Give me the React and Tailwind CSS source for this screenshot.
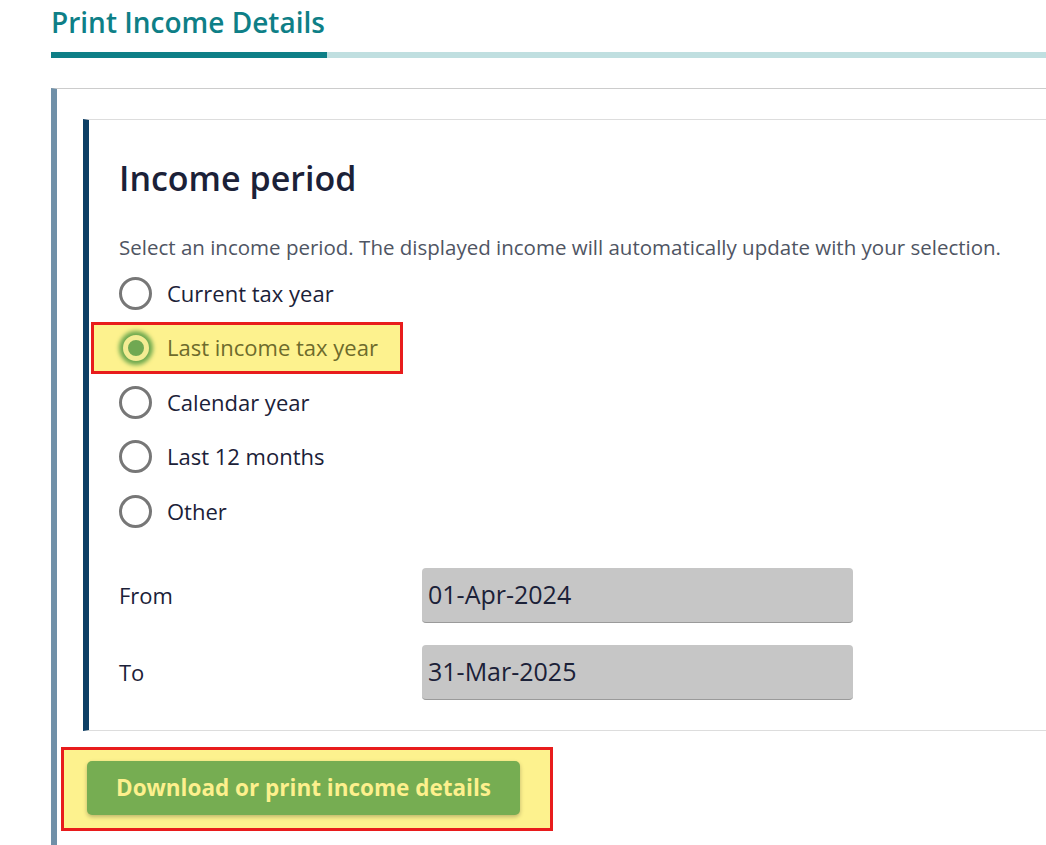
import React from "react";

const options = [
  { label: "Current tax year" },
  { label: "Last income tax year", selected: true },
  { label: "Calendar year" },
  { label: "Last 12 months" },
  { label: "Other" },
];

const Radio = ({ selected }) =>
  selected ? (
    <span className="flex h-[33px] w-[33px] items-center justify-center">
      <span className="h-[26px] w-[26px] rounded-full border-[5px] border-[#f3ec93] bg-[#70a852] shadow-[0_0_4px_4px_#6ea94f]" />
    </span>
  ) : (
    <span className="h-[33px] w-[33px] rounded-full border-[3px] border-[#777777] bg-white" />
  );

const RadioRow = ({ label, selected }) => {
  if (selected) {
    return (
      <div className="flex h-[54.5px] items-center">
        <div className="-ml-[28px] flex h-[52px] w-[312px] items-center gap-[15px] border-[3px] border-[#e81c1c] bg-[#fdf28e] pl-[25px]">
          <Radio selected />
          <span className="text-[22px] text-[#6d6b2c]">{label}</span>
        </div>
      </div>
    );
  }
  return (
    <div className="flex h-[54.5px] items-center gap-[15px]">
      <Radio />
      <span className="text-[22px] text-[#1b2138]">{label}</span>
    </div>
  );
};

const DateField = ({ label, value }) => (
  <div className="grid h-[55px] grid-cols-[303px_431px] items-center">
    <span className="text-[22px] text-[#1b2138]">{label}</span>
    <div className="flex h-[55px] items-center rounded-[4px] border-b border-[#9a9a9a] bg-[#c6c6c6] px-[6px] text-[25px] text-[#1b2138]">
      {value}
    </div>
  </div>
);

export default function App() {
  return (
    <div className="min-h-[845px] overflow-hidden bg-white pl-[51px] font-['Open_Sans',sans-serif]">
      <h1 className="pt-[4px] text-[28px] leading-[36px] font-semibold text-[#0e7f87]">Print Income Details</h1>
      <div className="mt-[12px] flex h-[6px]">
        <div className="w-[276px] bg-[#0e7f87]" />
        <div className="flex-1 bg-[#c0dfe0]" />
      </div>

      <div className="mt-[30px] border-t border-l-[6px] border-t-[#cccccc] border-l-[#7090a8] pb-[14px]">
        <div className="ml-[26px] mt-[30px] border-t border-b border-l-[6px] border-t-[#dddddd] border-b-[#dddddd] border-l-[#0d3f66] pl-[30px] pt-[36px] pb-[30px]">
          <h2 className="text-[34px] leading-[44px] font-semibold text-[#1b2138]">Income period</h2>
          <p className="mt-[33px] text-[20.5px] leading-[28px] text-[#4f5563]">
            Select an income period. The displayed income will automatically update with your selection.
          </p>
          <div className="mt-[5px]">
            {options.map((o) => (
              <RadioRow key={o.label} label={o.label} selected={o.selected} />
            ))}
          </div>
          <div className="mt-[29px] flex flex-col gap-[22px]">
            <DateField label="From" value="01-Apr-2024" />
            <DateField label="To" value="31-Mar-2025" />
          </div>
        </div>

        <div className="ml-[4px] mt-[16px] w-[492px] border-[3px] border-[#e81c1c] bg-[#fdf28e] pt-[11px] pb-[13px] pl-[23px]">
          <button
            type="button"
            className="h-[54px] w-[433px] rounded-[5px] bg-[#76ad52] text-[22.5px] font-bold text-[#fdf08d] shadow-[0_2px_4px_rgba(0,0,0,0.25)]"
          >
            Download or print income details
          </button>
        </div>
      </div>
    </div>
  );
}
